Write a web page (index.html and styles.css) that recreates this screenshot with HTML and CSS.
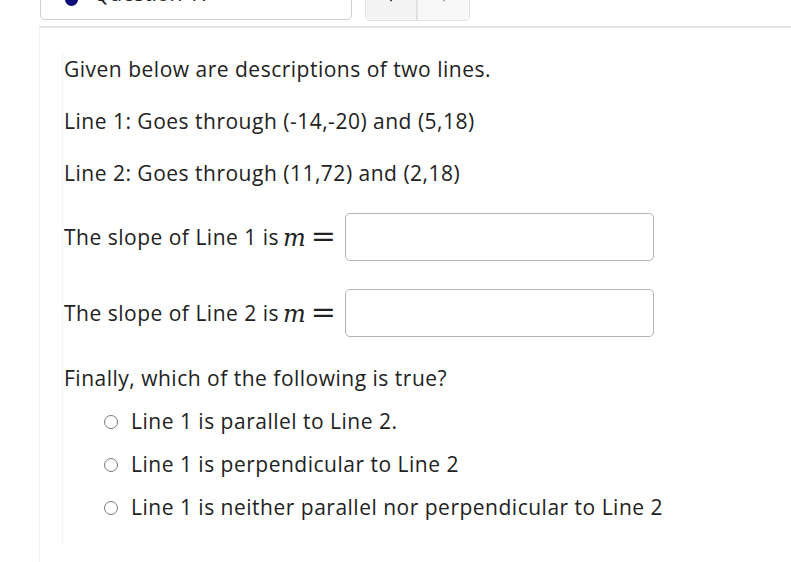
FILE: index.html
```html
<!DOCTYPE html>
<html>
<head>
<meta charset="utf-8">
<link rel="stylesheet" href="styles.css">
</head>
<body>
<div class="topbar">
  <div class="select">
    <span class="dot"></span>
    <span class="select-label">Question 17</span>
    <svg class="caret" width="10" height="10" viewBox="0 0 10 10"><path d="M1 3 L5 7 L9 3" fill="none" stroke="#777" stroke-width="1.5"/></svg>
  </div>
  <div class="btn-group">
    <div class="btn btn-left"><svg width="12" height="12" viewBox="0 0 12 12"><path d="M2 4 L6 10 L10 4" fill="none" stroke="#222" stroke-width="2"/></svg></div>
    <div class="btn btn-right"><svg width="12" height="12" viewBox="0 0 12 12"><path d="M2 4 L6 10 L10 4" fill="none" stroke="#999" stroke-width="2"/></svg></div>
  </div>
</div>
<div class="panel">
  <div class="content">
    <p class="para">Given below are descriptions of two lines.</p>
    <p class="para">Line 1: Goes through (-14,-20) and (5,18)</p>
    <p class="para">Line 2: Goes through (11,72) and (2,18)</p>
    <div class="slope-row">
      <span>The slope of Line 1 is</span>
      <span class="math"><i class="mvar">m</i><span class="meq">=</span></span>
      <span class="answer"></span>
    </div>
    <div class="slope-row">
      <span>The slope of Line 2 is</span>
      <span class="math"><i class="mvar">m</i><span class="meq">=</span></span>
      <span class="answer"></span>
    </div>
    <p class="para question">Finally, which of the following is true?</p>
    <ul class="choices">
      <li class="choice"><span class="radio"></span><span>Line 1 is parallel to Line 2.</span></li>
      <li class="choice"><span class="radio"></span><span>Line 1 is perpendicular to Line 2</span></li>
      <li class="choice"><span class="radio"></span><span>Line 1 is neither parallel nor perpendicular to Line 2</span></li>
    </ul>
  </div>
</div>
</body>
</html>
```
FILE: styles.css
```css
html, body {
  margin: 0;
  padding: 0;
  background: #ffffff;
  overflow: hidden;
}
body {
  font-family: "Open Sans", "Lato", sans-serif;
  color: #222222;
}
.topbar {
  display: flex;
  align-items: flex-end;
  margin-top: -22px;
  height: 42px;
  padding-left: 40px;
}
.select {
  width: 312px;
  height: 42px;
  box-sizing: border-box;
  border: 1px solid #cfcfcf;
  border-radius: 5px;
  display: flex;
  align-items: flex-start;
  padding-top: 14px;
  padding-left: 24px;
  position: relative;
  font-size: 21px;
}
.dot {
  width: 13px;
  height: 13px;
  border-radius: 50%;
  background: #0a0a7a;
  flex: none;
}
.select-label {
  margin-left: 15px;
  line-height: 1;
  margin-top: -10px;
}
.caret {
  position: absolute;
  right: 20px;
  top: 13px;
}
.btn-group {
  display: flex;
  margin-left: 13px;
  height: 43px;
  border: 1px solid #e2e2e2;
  border-radius: 5px;
  overflow: hidden;
  margin-bottom: -1px;
}
.btn {
  width: 52px;
  display: flex;
  justify-content: center;
  align-items: flex-start;
  padding-top: 13px;
  box-sizing: border-box;
}
.btn-left {
  background: #f4f4f4;
  border-right: 2px solid #e2e2e2;
}
.btn-right {
  background: #f8f8f8;
  width: 51px;
}
.panel {
  margin-top: 6px;
  margin-left: 39px;
  border-top: 2px solid #e4e4e4;
  border-left: 1px solid #f2f2f2;
  height: 600px;
  padding-top: 23px;
  padding-left: 22px;
}
.content {
  border-left: 1px solid #f3f3f3;
  padding-left: 1px;
  padding-top: 6px;
  padding-bottom: 26px;
  font-size: 21px;
  letter-spacing: 0.5px;
  line-height: 25px;
}
.para {
  margin: 0 0 27px 0;
}
.slope-row {
  display: flex;
  align-items: center;
  height: 48px;
  margin-bottom: 28px;
}
.math {
  font-family: "DejaVu Serif", "Liberation Serif", serif;
  font-size: 24px;
  letter-spacing: 0;
  margin-left: 4px;
  display: inline-flex;
  align-items: baseline;
}
.mvar {
  font-style: italic;
}
.meq {
  font-size: 30px;
  margin-left: 5px;
  margin-right: 9px;
}
.answer {
  width: 309px;
  height: 48px;
  box-sizing: border-box;
  border: 1.5px solid #b3b3b3;
  border-radius: 5px;
  background: #ffffff;
}
.question {
  margin-top: 29px;
  margin-bottom: 18px;
}
.choices {
  list-style: none;
  margin: 0;
  padding: 0 0 0 40px;
  display: flex;
  flex-direction: column;
  gap: 18px;
}
.choice {
  display: flex;
  align-items: center;
  gap: 13px;
}
.radio {
  width: 14px;
  height: 14px;
  box-sizing: border-box;
  border: 1.5px solid #7a7a7a;
  border-radius: 50%;
  flex: none;
}
```
